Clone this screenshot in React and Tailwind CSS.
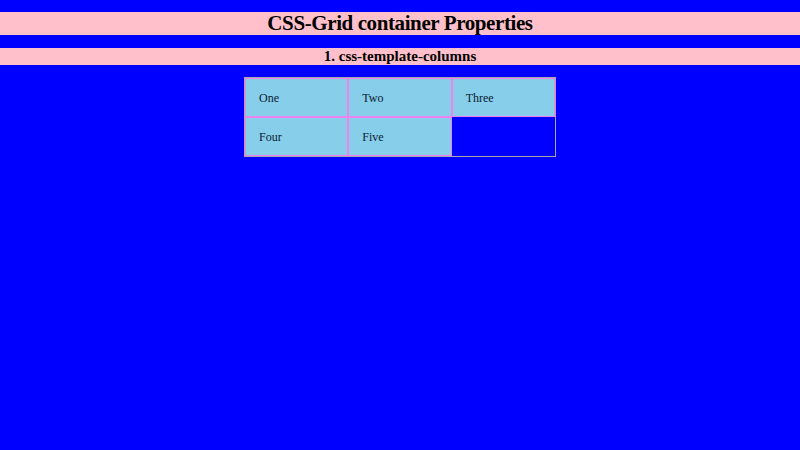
import React from "react";

const items = ["One", "Two", "Three", "Four", "Five"];

export default function App() {
  return (
    <div className="min-h-[450px] w-full bg-[#0000ff] pt-[12px] font-['Liberation_Serif',serif] text-black">
      <h1 className="bg-[#ffc0cb] text-center text-[21px] font-bold leading-[23px] tracking-[-0.4px]">
        CSS-Grid container Properties
      </h1>
      <h2 className="mt-[13px] bg-[#ffc0cb] text-center text-[15px] font-bold leading-[17px] tracking-[0px]">
        1. css-template-columns
      </h2>
      <div className="mx-auto mt-[12px] grid w-[312px] grid-cols-3 border border-[#a9a9a9]">
        {items.map((item) => (
          <div
            key={item}
            className="h-[39px] border border-[#ee82ee] bg-[#87ceeb] pl-[13px] text-[12px] leading-[38px] text-[#0a2030]"
          >
            {item}
          </div>
        ))}
      </div>
    </div>
  );
}
